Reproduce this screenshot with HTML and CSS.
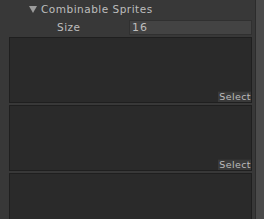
FILE: index.html
```html
<!DOCTYPE html>
<html lang="en">
<head>
  <meta charset="UTF-8">
  <title>Combinable Sprites</title>
  <link rel="stylesheet" href="styles.css">
</head>
<body>
  <div class="inspector">
    <div class="content">
      <div class="foldout">
        <span class="arrow"></span>
        <span class="title">Combinable Sprites</span>
      </div>
      <div class="field-row">
        <span class="label">Size</span>
        <div class="field">16</div>
      </div>
      <div class="slot"><button class="select">Select</button></div>
      <div class="slot"><button class="select">Select</button></div>
      <div class="slot"></div>
    </div>
    <div class="scrollbar"></div>
  </div>
</body>
</html>
```

FILE: styles.css
```css
body {
  margin: 0;
  background: #383838;
  font-family: "DejaVu Sans", sans-serif;
  font-size: 10.5px;
  letter-spacing: 0.5px;
  color: #bdbdbd;
  overflow: hidden;
}
.inspector {
  display: flex;
  width: 264px;
  height: 219px;
  overflow: hidden;
}
.content {
  flex: 1;
  padding-right: 3px;
  overflow: hidden;
}
.foldout {
  display: flex;
  align-items: center;
  height: 18px;
  padding-left: 29px;
}
.arrow {
  width: 0;
  height: 0;
  border-left: 4px solid transparent;
  border-right: 4px solid transparent;
  border-top: 7px solid #9c9c9c;
  margin-right: 4px;
}
.field-row {
  display: flex;
  align-items: center;
  height: 16px;
  margin-top: 1px;
}
.label {
  width: 72px;
  padding-left: 57px;
}
.field {
  flex: 1;
  height: 13px;
  line-height: 13px;
  padding-left: 2px;
  background: #434343;
  border: 1px solid #303030;
  font-size: 11px;
  letter-spacing: 1px;
}
.slot {
  display: flex;
  justify-content: flex-end;
  align-items: flex-end;
  height: 64px;
  margin: 2px 0 0 9px;
  background: #2a2a2a;
  border: 1px solid #1f1f1f;
}
.slot:last-child {
  height: 60px;
}
.select {
  background: #3a3a3a;
  color: #bcbcbc;
  border: none;
  border-top: 1px solid #2f2f2f;
  padding: 0 0 0 1px;
  height: 11px;
  line-height: 10px;
  font-family: "DejaVu Sans", sans-serif;
  font-size: 9.5px;
  letter-spacing: 0.4px;
}
.scrollbar {
  width: 8px;
  background: #4a4a4a;
  border-left: 1px solid #2c2c2c;
}
```
